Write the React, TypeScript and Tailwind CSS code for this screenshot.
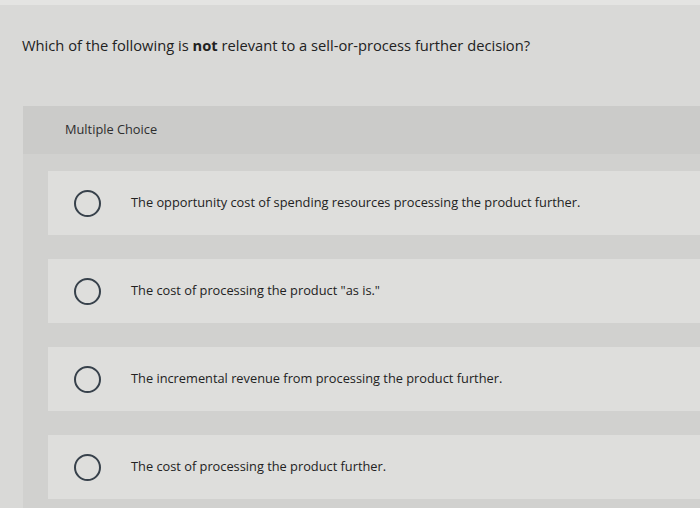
const options = [
  'The opportunity cost of spending resources processing the product further.',
  'The cost of processing the product "as is."',
  'The incremental revenue from processing the product further.',
  'The cost of processing the product further.'
];

// single choice row with an empty radio circle
const Option = ({ label }: { label: string }) => (
  <div className="flex items-center h-[64px] bg-[#dededc]">
    <div className="ml-[26px] w-[27px] h-[27px] rounded-full border-2 border-[#37414b] shrink-0" />
    <span className="ml-[30px] text-[12.8px] text-[#222]">{label}</span>
  </div>
);

export default function App() {
  return (
    <div
      className="w-[700px] h-[508px] overflow-hidden bg-[#d9d9d7] border-t-[5px] border-[#e4e4e2]"
      style={{ fontFamily: '"Open Sans", "Liberation Sans", sans-serif' }}
    >
      <p className="pl-[22px] pt-[30px] text-[14.7px] leading-[20px] text-[#222]">
        Which of the following is <b>not</b> relevant to a sell-or-process further decision?
      </p>
      <div className="ml-[23px] mt-[51px] bg-[#d1d1cf]">
        <div className="h-[48px] flex items-center pl-[42px] bg-[#cbcbc9] text-[12.8px] text-[#2e2e2e]">
          Multiple Choice
        </div>
        <div className="flex flex-col gap-[24px] pl-[25px] pt-[17px] pb-[30px]">
          {options.map((o) => (
            <Option key={o} label={o} />
          ))}
        </div>
      </div>
    </div>
  );
}
